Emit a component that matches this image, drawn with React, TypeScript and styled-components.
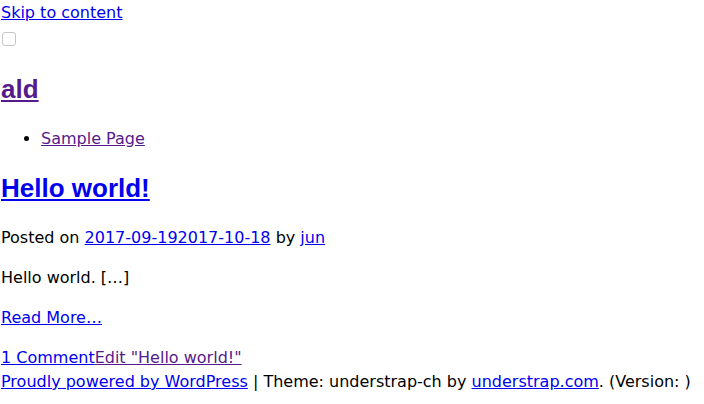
import React from "react";
import styled, { createGlobalStyle } from "styled-components";

const Global = createGlobalStyle`
  html, body { margin: 0; padding: 0; background: #fff; }
  body {
    font-family: "DejaVu Sans", "Noto Sans", sans-serif;
    font-size: 16px;
    line-height: 24px;
    color: #000;
    padding: 1px 0 0 1px;
  }
`;

const Page = styled.div`
  display: flex;
  flex-direction: column;
`;

const Link = styled.a<{ $visited?: boolean }>`
  color: ${(p) => (p.$visited ? "#551a8b" : "#0000ee")};
  text-decoration: underline;
`;

const SkipRow = styled.div`
  height: 24px;
`;

const ToggleRow = styled.div`
  height: 24px;
  display: flex;
  align-items: flex-start;
`;

const Toggle = styled.input.attrs({ type: "checkbox" })`
  appearance: none;
  -webkit-appearance: none;
  margin: 7px 0 0 1px;
  width: 14px;
  height: 14px;
  box-sizing: border-box;
  border: 1px solid #c6c6c6;
  border-radius: 3px;
  background: #fff;
`;

const SiteTitle = styled.h1`
  margin: 21px 0 0;
  font-family: "Liberation Sans", Arial, sans-serif;
  font-size: 26px;
  line-height: 39px;
  font-weight: bold;
`;

const Menu = styled.ul`
  margin: 18px 0 0;
  padding-left: 40px;
  list-style: disc;
`;

const EntryTitle = styled.h2`
  margin: 18px 0 0;
  font-family: "Liberation Sans", Arial, sans-serif;
  font-size: 26px;
  line-height: 39px;
  font-weight: bold;
`;

const Para = styled.p<{ $gap?: number }>`
  margin: ${(p) => p.$gap ?? 16}px 0 0;
`;

const EntryFooter = styled.div`
  margin-top: 16px;
`;

const SiteInfo = styled.div``;

export default function App() {
  return (
    <Page>
      <Global />
      <SkipRow>
        <Link href="#content">Skip to content</Link>
      </SkipRow>
      <ToggleRow>
        <Toggle aria-label="Toggle navigation" />
      </ToggleRow>
      <SiteTitle>
        <Link $visited href="#">ald</Link>
      </SiteTitle>
      <Menu>
        <li>
          <Link $visited href="#">Sample Page</Link>
        </li>
      </Menu>
      <EntryTitle>
        <Link href="#">Hello world!</Link>
      </EntryTitle>
      <Para $gap={18}>
        Posted on <Link href="#">2017-09-192017-10-18</Link> by <Link href="#">jun</Link>
      </Para>
      <Para>Hello world. […]</Para>
      <Para>
        <Link href="#">Read More…</Link>
      </Para>
      <EntryFooter>
        <Link href="#">1 Comment</Link>
        <Link $visited href="#">Edit "Hello world!"</Link>
      </EntryFooter>
      <SiteInfo>
        <Link href="#">Proudly powered by WordPress</Link> | Theme: understrap-ch by{" "}
        <Link href="#">understrap.com</Link>. (Version: )
      </SiteInfo>
    </Page>
  );
}
